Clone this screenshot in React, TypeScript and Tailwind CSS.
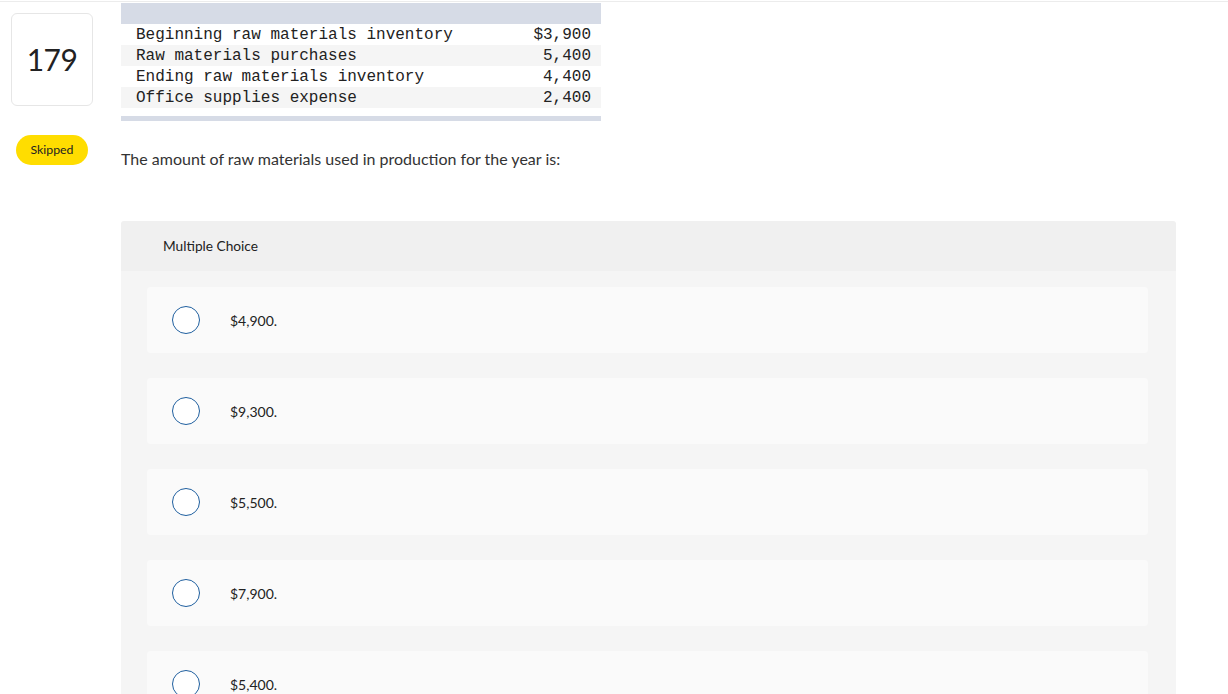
import React from "react";

const rows = [
  { label: "Beginning raw materials inventory", value: "$3,900" },
  { label: "Raw materials purchases", value: "5,400" },
  { label: "Ending raw materials inventory", value: "4,400" },
  { label: "Office supplies expense", value: "2,400" },
];

const choices = ["$4,900.", "$9,300.", "$5,500.", "$7,900.", "$5,400."];

const sans = { fontFamily: "Lato, 'Open Sans', Arial, sans-serif" };

export default function App() {
  return (
    <div className="w-[1228px] h-[694px] overflow-hidden bg-white" style={sans}>
      <div className="h-[2px] border-b border-[#ececec]" />
      <div className="flex">
        {/* question number + status */}
        <div className="w-[121px] shrink-0 flex flex-col">
          <div className="ml-[11px] mt-[11px] w-[82px] h-[93px] rounded-[6px] border border-[#e6e6e6] flex items-center justify-center text-[30px] text-[#222] tracking-[-0.5px]">
            179
          </div>
          <div className="ml-[16px] mt-[29px] w-[72px] h-[30px] rounded-full bg-[#ffdd00] flex items-center justify-center text-[12.3px] text-[#222]">
            Skipped
          </div>
        </div>

        {/* question body */}
        <div className="w-[1055px] flex flex-col">
          <div className="w-[480px] mt-[1px]">
            <div className="h-[21px] bg-[#d6dbe6]" />
            <div style={{ fontFamily: "'Liberation Mono', 'Courier New', monospace" }} className="text-[16px] text-[#222]">
              {rows.map((r, i) => (
                <div
                  key={r.label}
                  className={`h-[21px] flex items-center justify-between pl-[15px] pr-[10px] pt-[1px] ${i % 2 === 1 ? "bg-[#f5f5f5]" : "bg-white"}`}
                >
                  <span>{r.label}</span>
                  <span>{r.value}</span>
                </div>
              ))}
            </div>
            <div className="h-[5px] mt-[8px] bg-[#d6dbe6]" />
          </div>

          <p className="mt-[28px] text-[16px] text-[#333] leading-[20px]">
            The amount of raw materials used in production for the year is:
          </p>

          <div className="mt-[52px] rounded-t-[3px] overflow-hidden">
            <div className="h-[50px] bg-[#f0f0f0] flex items-center pl-[42px] text-[13.7px] text-[#222]">
              Multiple Choice
            </div>
            <div className="bg-[#f5f5f5] pl-[26px] pr-[28px] pt-[16px] pb-[16px] flex flex-col gap-[25px]">
              {choices.map((c) => (
                <div key={c} className="h-[66px] bg-[#fafafa] rounded-[4px] flex items-center pl-[25px]">
                  <span className="w-[28px] h-[28px] rounded-full border-[1.5px] border-[#1f5f9f] bg-white shrink-0" />
                  <span className="ml-[30px] text-[14px] text-[#222]">{c}</span>
                </div>
              ))}
            </div>
          </div>
        </div>
      </div>
    </div>
  );
}
